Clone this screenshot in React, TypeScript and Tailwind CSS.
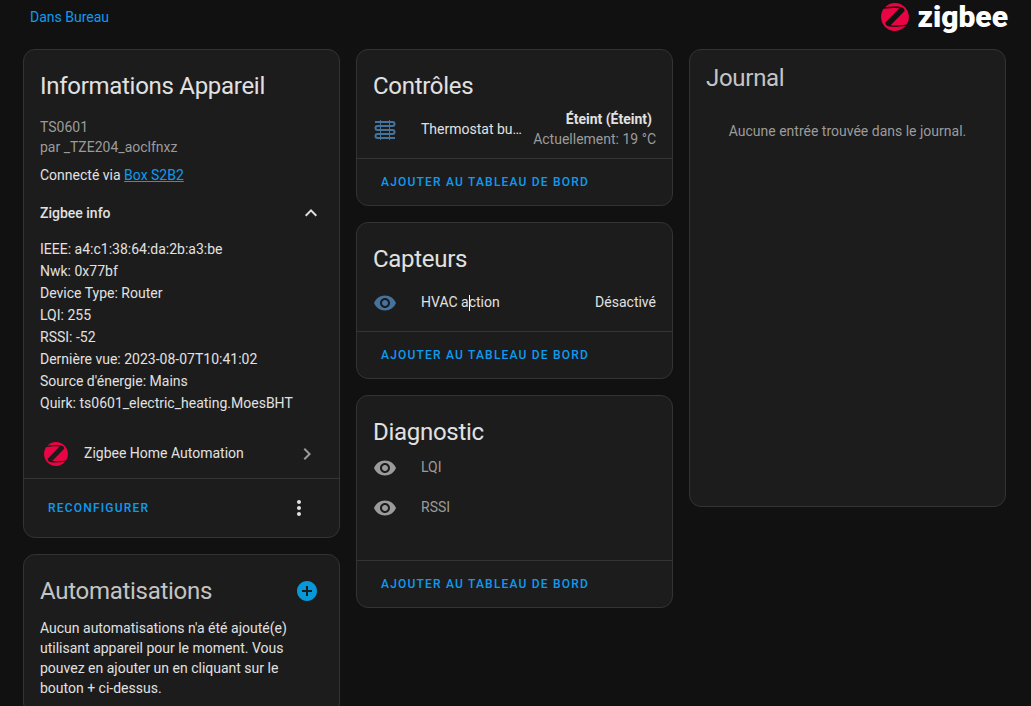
import React from 'react';
import { MdAddCircle, MdChevronRight, MdKeyboardArrowUp, MdMoreVert, MdRemoveRedEye } from 'react-icons/md';
import { SiZigbee } from 'react-icons/si';

const zigbeeInfo = [
  { label: 'IEEE', value: 'a4:c1:38:64:da:2b:a3:be' },
  { label: 'Nwk', value: '0x77bf' },
  { label: 'Device Type', value: 'Router' },
  { label: 'LQI', value: '255' },
  { label: 'RSSI', value: '-52' },
  { label: 'Dernière vue', value: '2023-08-07T10:41:02' },
  { label: "Source d'énergie", value: 'Mains' },
  { label: 'Quirk', value: 'ts0601_electric_heating.MoesBHT' },
];

interface CardProps {
  children: React.ReactNode;
  className?: string;
}

const Card: React.FC<CardProps> = ({ children, className = '' }) => (
  <section className={`rounded-xl border border-[#333333] bg-[#1c1c1c] ${className}`}>{children}</section>
);

const CardTitle: React.FC<CardProps> = ({ children, className = '' }) => (
  <h2 className={`px-4 pt-3 text-2xl leading-[48px] tracking-[-0.012em] ${className}`}>{children}</h2>
);

const TextButton: React.FC<CardProps> = ({ children }) => (
  <button type="button" className="h-9 px-2 text-xs font-medium uppercase tracking-widest text-[#0d9bf0]">
    {children}
  </button>
);

const DashboardFooter = () => (
  <div className="border-t border-[#333333] px-4 py-[5px]">
    <TextButton>Ajouter au tableau de bord</TextButton>
  </div>
);

const HeatingCoil = () => (
  <svg viewBox="0 0 24 24" className="size-6 shrink-0 text-[#44739e]" fill="none" stroke="currentColor">
    <path
      d="M2 4H19.5a2 2 0 0 1 0 4H4.5a2 2 0 0 0 0 4H19.5a2 2 0 0 1 0 4H4.5a2 2 0 0 0 0 4H22"
      strokeWidth="2"
    />
    <path d="M7.5 2V22M16.5 2V22" />
  </svg>
);

interface EntityRowProps {
  icon: React.ReactNode;
  name: React.ReactNode;
  children?: React.ReactNode;
  className?: string;
}

const EntityRow: React.FC<EntityRowProps> = ({ icon, name, children, className = '' }) => (
  <div className={`flex h-10 items-center px-4 ${className}`}>
    {icon}
    <div className="ml-6 flex min-w-0 flex-1 items-center justify-between pb-0.5">
      <span className="whitespace-nowrap">{name}</span>
      {children}
    </div>
  </div>
);

const DeviceCard = () => (
  <Card>
    <CardTitle>Informations Appareil</CardTitle>
    <div className="px-4 pt-[7px]">
      <div className="text-[#9b9b9b]">TS0601</div>
      <div className="text-[#9b9b9b]">par _TZE204_aoclfnxz</div>
      <div className="mt-2">
        Connecté via <a href="#box" className="text-[#0d9bf0] underline">Box S2B2</a>
      </div>
      <button type="button" className="mt-1 flex h-12 w-full items-center justify-between font-medium">
        Zigbee info
        <MdKeyboardArrowUp className="size-6" />
      </button>
      <div className="pt-px leading-[22px]">
        {zigbeeInfo.map((item) => (
          <div key={item.label}>
            {item.label}: {item.value}
          </div>
        ))}
      </div>
    </div>
    <a href="#zha" className="mt-4 flex h-12 items-center px-5">
      <SiZigbee className="size-6 text-[#eb0443]" />
      <span className="ml-4 flex-1 pb-0.5">Zigbee Home Automation</span>
      <MdChevronRight className="size-6 text-[#9b9b9b]" />
    </a>
    <div className="flex h-[59px] items-center justify-between border-t border-[#333333] pl-4 pr-7">
      <TextButton>Reconfigurer</TextButton>
      <button type="button" aria-label="Menu">
        <MdMoreVert className="size-6" />
      </button>
    </div>
  </Card>
);

const AutomationCard = () => (
  <Card>
    <div className="flex items-center justify-between pr-5">
      <CardTitle className="text-[#c4c4c4]">Automatisations</CardTitle>
      <button type="button" aria-label="Ajouter" className="mt-3 text-[#0698d8]">
        <MdAddCircle className="size-6" />
      </button>
    </div>
    <p className="px-4 pb-4 pt-[3px] pr-8">
      Aucun automatisations n'a été ajouté(e) utilisant appareil pour le moment. Vous pouvez en ajouter un en
      cliquant sur le bouton + ci-dessus.
    </p>
  </Card>
);

const App = () => (
  <div className="min-h-screen bg-[#111111] pl-[23px] pr-[25px] font-['Roboto',sans-serif] text-sm leading-5 text-[#e1e1e1]">
    <header className="flex h-[49px] items-start justify-between">
      <a href="#bureau" className="mt-[7px] pl-[7px] text-[#0d9bf0]">Dans Bureau</a>
      <div className="-mr-0.5 flex h-[34px] items-center gap-2">
        <SiZigbee className="size-7 text-[#eb0443]" />
        <span className="text-3xl font-black leading-8 text-white">zigbee</span>
      </div>
    </header>

    <main className="grid grid-cols-3 items-start gap-4">
      <div className="flex flex-col gap-4">
        <DeviceCard />
        <AutomationCard />
      </div>

      <div className="flex flex-col gap-4">
        <Card>
          <CardTitle>Contrôles</CardTitle>
          <EntityRow icon={<HeatingCoil />} name="Thermostat bu…" className="mb-2">
            <div className="text-right">
              <div className="pr-1 font-bold">Éteint (Éteint)</div>
              <div className="text-[#9b9b9b]">Actuellement: 19 °C</div>
            </div>
          </EntityRow>
          <DashboardFooter />
        </Card>

        <Card>
          <CardTitle>Capteurs</CardTitle>
          <EntityRow
            icon={<MdRemoveRedEye className="size-6 shrink-0 text-[#44739e]" />}
            name={
              <>
                HVAC a<span className="-mr-px inline-block h-4 w-px bg-white align-middle" />ction
              </>
            }
            className="mb-2"
          >
            <span>Désactivé</span>
          </EntityRow>
          <DashboardFooter />
        </Card>

        <Card>
          <CardTitle>Diagnostic</CardTitle>
          <div className="-mt-2 pb-8 text-[#9b9b9b]">
            <EntityRow icon={<MdRemoveRedEye className="size-6 shrink-0" />} name="LQI" />
            <EntityRow icon={<MdRemoveRedEye className="size-6 shrink-0" />} name="RSSI" />
          </div>
          <DashboardFooter />
        </Card>
      </div>

      <Card className="min-h-[458px] pt-1 text-[#c4c4c4]">
        <h2 className="px-4 text-2xl leading-[48px] tracking-[-0.012em]">Journal</h2>
        <p className="px-4 pt-[19px] text-center text-[#9b9b9b]">Aucune entrée trouvée dans le journal.</p>
      </Card>
    </main>
  </div>
);

export default App;
